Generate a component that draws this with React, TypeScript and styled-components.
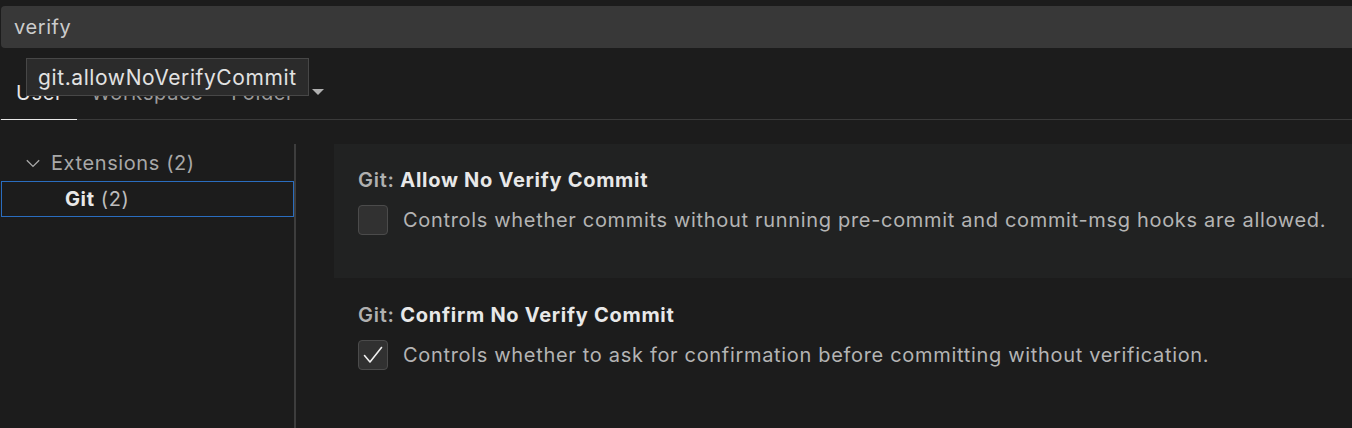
import React from "react";
import styled, { createGlobalStyle } from "styled-components";

const Global = createGlobalStyle`
  html, body { margin: 0; padding: 0; background: #1c1c1c; }
  body { font-family: Inter, "Noto Sans", sans-serif; -webkit-font-smoothing: antialiased; letter-spacing: 0.6px; }
  * { box-sizing: border-box; }
`;

const Page = styled.div`
  position: relative;
  width: 1352px;
  height: 428px;
  overflow: hidden;
  background: #1c1c1c;
  padding-top: 6px;
  display: flex;
  flex-direction: column;
`;

const SearchBar = styled.div`
  margin-left: 1px;
  height: 42px;
  background: #383838;
  border-radius: 4px 0 0 4px;
  padding-left: 13px;
  display: flex;
  align-items: center;
  font-size: 20px;
  color: #cccccc;
`;

const TabsRow = styled.div`
  height: 72px;
  display: flex;
  align-items: flex-end;
  border-bottom: 1px solid #3a3a3a;
  padding-left: 1px;
`;

const Tab = styled.div<{ $active?: boolean }>`
  padding: 0 14px 15px;
  font-size: 20px;
  color: ${(p) => (p.$active ? "#e6e6e6" : "#9a9a9a")};
  box-shadow: ${(p) => (p.$active ? "inset 0 -1px 0 #e8e8e8" : "none")};
  margin-bottom: -1px;
  &:first-child { padding-left: 15px; }
`;

const DropCaret = styled.div`
  margin-left: 3px;
  padding-bottom: 23px;
  display: flex;
`;

const Tooltip = styled.div`
  position: absolute;
  left: 26px;
  top: 58px;
  height: 38px;
  padding: 0 11px;
  display: flex;
  align-items: center;
  background: #2b2b2b;
  border: 1px solid #474747;
  font-size: 21px;
  color: #e2e2e2;
`;

const Body = styled.div`
  flex: 1;
  display: flex;
  padding-top: 24px;
`;

const Sidebar = styled.div`
  width: 294px;
  display: flex;
  flex-direction: column;
  padding: 1px 0 0 1px;
`;

const TreeRow = styled.div<{ $selected?: boolean; $indent: number }>`
  height: 36px;
  display: flex;
  align-items: center;
  padding-left: ${(p) => p.$indent}px;
  border: 1px solid ${(p) => (p.$selected ? "#2a6dbf" : "transparent")};
  font-size: 20px;
  color: #a8a8a8;
  gap: 9px;
`;

const Bold = styled.span`
  font-weight: 700;
  color: #e8e8e8;
`;

const Count = styled.span`
  color: #bdbdbd;
`;

const Divider = styled.div`
  width: 2px;
  background: #3d3d3d;
`;

const Content = styled.div`
  flex: 1;
  padding-left: 38px;
  display: flex;
  flex-direction: column;
`;

const Setting = styled.div<{ $focused?: boolean }>`
  background: ${(p) => (p.$focused ? "#212222" : "transparent")};
  padding: ${(p) => (p.$focused ? "24px" : "25px")} 24px 0;
  height: ${(p) => (p.$focused ? "134px" : "auto")};
  display: flex;
  flex-direction: column;
`;

const Title = styled.div`
  font-size: 20px;
  line-height: 24px;
  color: #e8e8e8;
  font-weight: 700;
  letter-spacing: 0.72px;
`;

const Category = styled.span`
  color: #b0b0b0;
  font-weight: 600;
`;

const Row = styled.div`
  margin-top: 13px;
  display: flex;
  align-items: center;
  gap: 15px;
`;

const Box = styled.div`
  width: 30px;
  height: 30px;
  border-radius: 4px;
  background: #313131;
  border: 1px solid #4b4b4b;
  display: flex;
  align-items: center;
  justify-content: center;
`;

const Desc = styled.div`
  font-size: 20px;
  color: #b4b4b4;
  letter-spacing: 0.68px;
`;

const Chevron = () => (
  <svg width="18" height="18" viewBox="0 0 16 16" fill="none">
    <path d="M2.5 5.5 L8 11 L13.5 5.5" stroke="#a8a8a8" strokeWidth="1.2" />
  </svg>
);

const Check = () => (
  <svg width="24" height="24" viewBox="0 0 24 24" fill="none">
    <path d="M3.5 12.5 L9 19 L20.5 4.5" stroke="#f0f0f0" strokeWidth="1.6" strokeLinecap="round" strokeLinejoin="round" />
  </svg>
);

const Caret = () => (
  <svg width="14" height="8" viewBox="0 0 14 8">
    <path d="M1 1 L13 1 L7 7 Z" fill="#b0b0b0" />
  </svg>
);

const settings = [
  {
    name: "Allow No Verify Commit",
    desc: "Controls whether commits without running pre-commit and commit-msg hooks are allowed.",
    checked: false,
    focused: true,
  },
  {
    name: "Confirm No Verify Commit",
    desc: "Controls whether to ask for confirmation before committing without verification.",
    checked: true,
    focused: false,
  },
];

export default function App() {
  return (
    <Page>
      <Global />
      <SearchBar>verify</SearchBar>
      <TabsRow>
        <Tab $active>User</Tab>
        <Tab>Workspace</Tab>
        <Tab>Folder</Tab>
        <DropCaret>
          <Caret />
        </DropCaret>
      </TabsRow>
      <Tooltip>git.allowNoVerifyCommit</Tooltip>
      <Body>
        <Sidebar>
          <TreeRow $indent={22}>
            <Chevron />
            <span>Extensions (2)</span>
          </TreeRow>
          <TreeRow $selected $indent={63}>
            <span>
              <Bold>Git</Bold> <Count>(2)</Count>
            </span>
          </TreeRow>
        </Sidebar>
        <Divider />
        <Content>
          {settings.map((s) => (
            <Setting key={s.name} $focused={s.focused}>
              <Title>
                <Category>Git: </Category>
                {s.name}
              </Title>
              <Row>
                <Box>{s.checked && <Check />}</Box>
                <Desc>{s.desc}</Desc>
              </Row>
            </Setting>
          ))}
        </Content>
      </Body>
    </Page>
  );
}
